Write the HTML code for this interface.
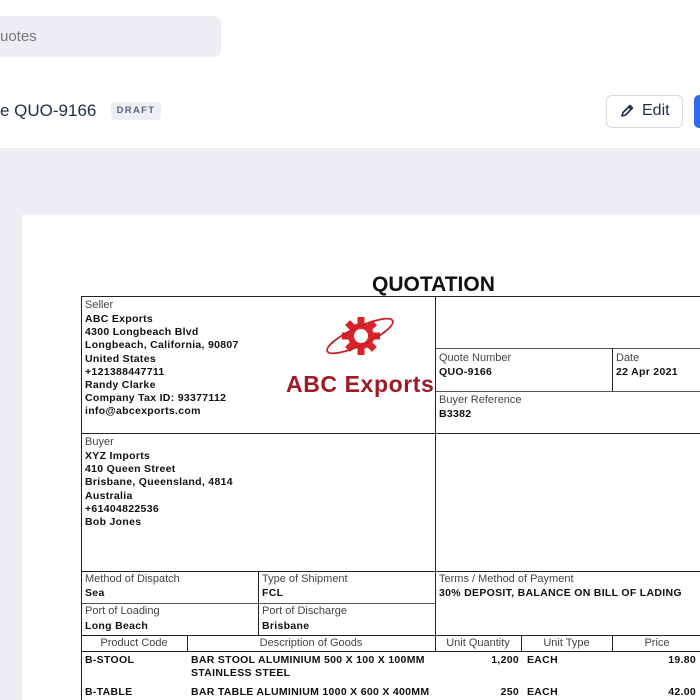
<!DOCTYPE html>
<html><head><meta charset="utf-8"><style>
*{margin:0;padding:0;box-sizing:border-box}
body{width:700px;height:700px;overflow:hidden;background:#fff;font-family:"Liberation Sans",Arial,sans-serif;position:relative}
.a{position:absolute}
.grey{left:0;top:148px;width:700px;height:552px;background:#edeef2}
.paper{left:22px;top:215px;width:678px;height:485px;background:#fff}
.h{position:absolute;height:1px;background:#222}
.v{position:absolute;width:1px;background:#222}
.l{position:absolute;font-size:11px;color:#444;line-height:13px}
.b{position:absolute;font-size:10.5px;font-weight:bold;color:#111;line-height:13.2px;letter-spacing:.3px}
.th{position:absolute;font-size:11px;color:#444;text-align:center;top:637px}
</style></head><body>
<div class="a" style="left:-10px;top:16px;width:231px;height:41px;background:#edeef2;border-radius:7px"></div>
<div class="a" style="left:0;top:28px;font-size:15px;color:#777">uotes</div>
<div class="a" style="left:0;top:101px;font-size:17px;color:#1f2d4d">e QUO-9166</div>
<div class="a" style="left:111px;top:102px;width:50px;height:18px;background:#eceef2;border-radius:4px;font-size:9.5px;font-weight:bold;letter-spacing:1.3px;color:#5a6480;text-align:center;line-height:18px">DRAFT</div>
<div class="a" style="left:606px;top:95px;width:77px;height:33px;border:1px solid #d5d8de;border-radius:6px;background:#fff"></div>
<svg class="a" style="left:619px;top:103px" width="16" height="16" viewBox="0 0 16 16"><path d="M3 13l1-3.5 7-7 2.5 2.5-7 7z M10 4l2.5 2.5" fill="none" stroke="#1f2d4d" stroke-width="1.6" stroke-linejoin="round"/></svg>
<div class="a" style="left:642px;top:102px;font-size:16px;color:#1f2d4d">Edit</div>
<div class="a" style="left:694px;top:95px;width:10px;height:33px;background:#2f6bea;border-radius:6px"></div>
<div class="a grey"></div>
<div class="a paper"></div>
<div class="a" style="left:372px;top:273px;font-size:21px;font-weight:bold;color:#111">QUOTATION</div>
<div class="h" style="left:81px;top:296px;width:619px"></div>
<div class="h" style="left:435px;top:348px;width:265px;background:#555"></div>
<div class="h" style="left:435px;top:391px;width:265px;background:#555"></div>
<div class="h" style="left:81px;top:433px;width:619px"></div>
<div class="h" style="left:81px;top:571px;width:619px"></div>
<div class="h" style="left:81px;top:603px;width:354px;background:#555"></div>
<div class="h" style="left:81px;top:635px;width:619px"></div>
<div class="h" style="left:81px;top:651px;width:619px"></div>
<div class="v" style="left:81px;top:296px;height:404px"></div>
<div class="v" style="left:435px;top:296px;height:355px"></div>
<div class="v" style="left:612px;top:348px;height:43px"></div>
<div class="v" style="left:258px;top:571px;height:64px"></div>
<div class="v" style="left:187px;top:635px;height:16px"></div>
<div class="v" style="left:521px;top:635px;height:16px"></div>
<div class="v" style="left:612px;top:635px;height:16px"></div>
<div class="l" style="left:85px;top:299px">Seller</div>
<div class="b" style="left:85px;top:313px">ABC Exports<br>4300 Longbeach Blvd<br>Longbeach, California, 90807<br>United States<br>+121388447711<br>Randy Clarke<br>Company Tax ID: 93377112<br>info@abcexports.com</div>
<svg class="a" style="left:320px;top:310px" width="80" height="55" viewBox="0 0 80 55">
<g transform="translate(41,26)" fill="#d8232a">
<circle r="13"/>
<g id="t"><rect x="-3.5" y="-19" width="7" height="8"/></g>
<use href="#t" transform="rotate(45)"/><use href="#t" transform="rotate(90)"/><use href="#t" transform="rotate(135)"/><use href="#t" transform="rotate(180)"/><use href="#t" transform="rotate(225)"/><use href="#t" transform="rotate(270)"/><use href="#t" transform="rotate(315)"/>
<circle r="7" fill="#fff"/>
</g>
<ellipse cx="40" cy="26" rx="36" ry="9" transform="rotate(-25 40 26)" fill="none" stroke="#c81e26" stroke-width="1.8"/>
</svg>
<div class="a" style="left:286px;top:371px;font-size:23px;font-weight:bold;color:#9c1b27;letter-spacing:.6px">ABC Exports</div>
<div class="l" style="left:439px;top:352px">Quote Number</div>
<div class="b" style="left:439px;top:366px">QUO-9166</div>
<div class="l" style="left:616px;top:352px">Date</div>
<div class="b" style="left:616px;top:366px">22 Apr 2021</div>
<div class="l" style="left:439px;top:394px">Buyer Reference</div>
<div class="b" style="left:439px;top:408px">B3382</div>
<div class="l" style="left:85px;top:436px">Buyer</div>
<div class="b" style="left:85px;top:450px">XYZ Imports<br>410 Queen Street<br>Brisbane, Queensland, 4814<br>Australia<br>+61404822536<br>Bob Jones</div>
<div class="l" style="left:85px;top:573px">Method of Dispatch</div>
<div class="b" style="left:85px;top:587px">Sea</div>
<div class="l" style="left:262px;top:573px">Type of Shipment</div>
<div class="b" style="left:262px;top:587px">FCL</div>
<div class="l" style="left:439px;top:573px">Terms / Method of Payment</div>
<div class="b" style="left:439px;top:587px">30% DEPOSIT, BALANCE ON BILL OF LADING</div>
<div class="l" style="left:85px;top:605px">Port of Loading</div>
<div class="b" style="left:85px;top:620px">Long Beach</div>
<div class="l" style="left:262px;top:605px">Port of Discharge</div>
<div class="b" style="left:262px;top:620px">Brisbane</div>
<div class="th" style="left:81px;width:106px">Product Code</div>
<div class="th" style="left:187px;width:248px">Description of Goods</div>
<div class="th" style="left:435px;width:86px">Unit Quantity</div>
<div class="th" style="left:521px;width:91px">Unit Type</div>
<div class="th" style="left:612px;width:90px">Price</div>
<div class="b" style="left:85px;top:654px">B-STOOL</div>
<div class="b" style="left:191px;top:654px">BAR STOOL ALUMINIUM 500 X 100 X 100MM<br>STAINLESS STEEL</div>
<div class="b" style="left:435px;top:654px;width:84px;text-align:right">1,200</div>
<div class="b" style="left:527px;top:654px">EACH</div>
<div class="b" style="left:612px;top:654px;width:84px;text-align:right">19.80</div>
<div class="b" style="left:85px;top:686px">B-TABLE</div>
<div class="b" style="left:191px;top:686px">BAR TABLE ALUMINIUM 1000 X 600 X 400MM</div>
<div class="b" style="left:435px;top:686px;width:84px;text-align:right">250</div>
<div class="b" style="left:527px;top:686px">EACH</div>
<div class="b" style="left:612px;top:686px;width:84px;text-align:right">42.00</div>
</body></html>
